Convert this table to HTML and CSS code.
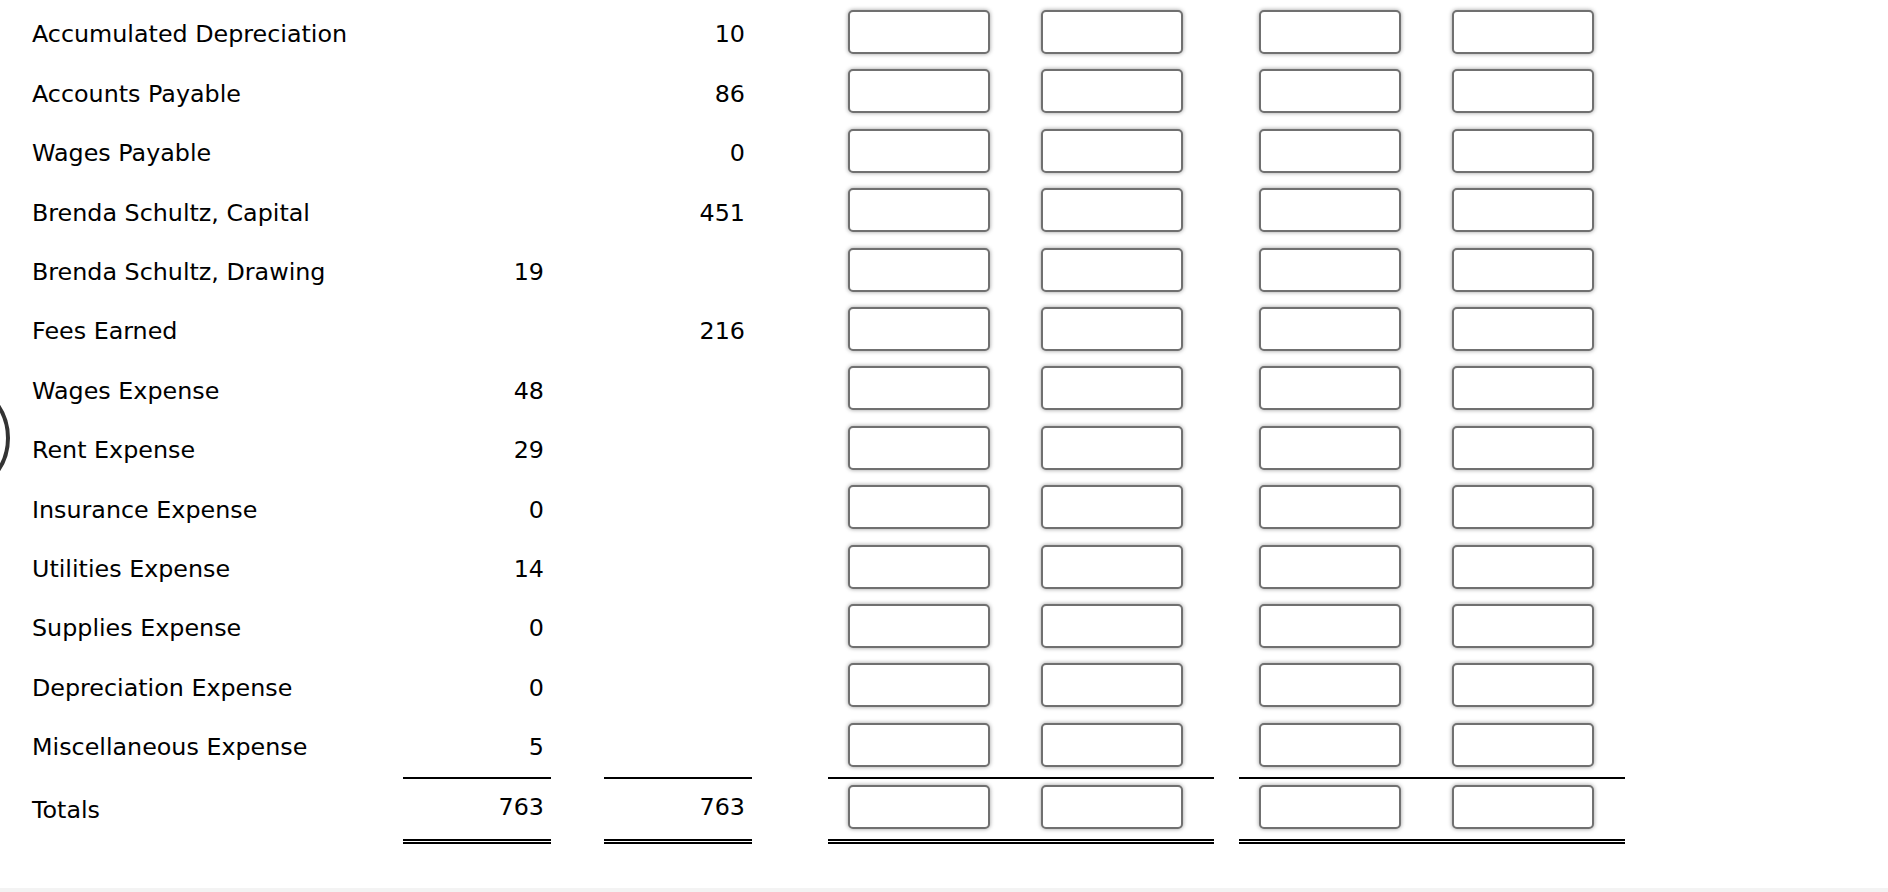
FILE: index.html
```html
<!DOCTYPE html>
<html>
<head>
<meta charset="utf-8">
<link rel="stylesheet" href="styles.css">
</head>
<body>
<div class="ring"></div>
<div class="sheet">
  <div class="row"><div class="label">Accumulated Depreciation</div><div class="num"></div><div class="num num2">10</div><div class="grp g1"><div class="cell"><input class="box"></div><div class="cell"><input class="box"></div></div><div class="grp g2"><div class="cell"><input class="box"></div><div class="cell"><input class="box"></div></div></div>
  <div class="row"><div class="label">Accounts Payable</div><div class="num"></div><div class="num num2">86</div><div class="grp g1"><div class="cell"><input class="box"></div><div class="cell"><input class="box"></div></div><div class="grp g2"><div class="cell"><input class="box"></div><div class="cell"><input class="box"></div></div></div>
  <div class="row"><div class="label">Wages Payable</div><div class="num"></div><div class="num num2">0</div><div class="grp g1"><div class="cell"><input class="box"></div><div class="cell"><input class="box"></div></div><div class="grp g2"><div class="cell"><input class="box"></div><div class="cell"><input class="box"></div></div></div>
  <div class="row"><div class="label">Brenda Schultz, Capital</div><div class="num"></div><div class="num num2">451</div><div class="grp g1"><div class="cell"><input class="box"></div><div class="cell"><input class="box"></div></div><div class="grp g2"><div class="cell"><input class="box"></div><div class="cell"><input class="box"></div></div></div>
  <div class="row"><div class="label">Brenda Schultz, Drawing</div><div class="num">19</div><div class="num num2"></div><div class="grp g1"><div class="cell"><input class="box"></div><div class="cell"><input class="box"></div></div><div class="grp g2"><div class="cell"><input class="box"></div><div class="cell"><input class="box"></div></div></div>
  <div class="row"><div class="label">Fees Earned</div><div class="num"></div><div class="num num2">216</div><div class="grp g1"><div class="cell"><input class="box"></div><div class="cell"><input class="box"></div></div><div class="grp g2"><div class="cell"><input class="box"></div><div class="cell"><input class="box"></div></div></div>
  <div class="row"><div class="label">Wages Expense</div><div class="num">48</div><div class="num num2"></div><div class="grp g1"><div class="cell"><input class="box"></div><div class="cell"><input class="box"></div></div><div class="grp g2"><div class="cell"><input class="box"></div><div class="cell"><input class="box"></div></div></div>
  <div class="row"><div class="label">Rent Expense</div><div class="num">29</div><div class="num num2"></div><div class="grp g1"><div class="cell"><input class="box"></div><div class="cell"><input class="box"></div></div><div class="grp g2"><div class="cell"><input class="box"></div><div class="cell"><input class="box"></div></div></div>
  <div class="row"><div class="label">Insurance Expense</div><div class="num">0</div><div class="num num2"></div><div class="grp g1"><div class="cell"><input class="box"></div><div class="cell"><input class="box"></div></div><div class="grp g2"><div class="cell"><input class="box"></div><div class="cell"><input class="box"></div></div></div>
  <div class="row"><div class="label">Utilities Expense</div><div class="num">14</div><div class="num num2"></div><div class="grp g1"><div class="cell"><input class="box"></div><div class="cell"><input class="box"></div></div><div class="grp g2"><div class="cell"><input class="box"></div><div class="cell"><input class="box"></div></div></div>
  <div class="row"><div class="label">Supplies Expense</div><div class="num">0</div><div class="num num2"></div><div class="grp g1"><div class="cell"><input class="box"></div><div class="cell"><input class="box"></div></div><div class="grp g2"><div class="cell"><input class="box"></div><div class="cell"><input class="box"></div></div></div>
  <div class="row"><div class="label">Depreciation Expense</div><div class="num">0</div><div class="num num2"></div><div class="grp g1"><div class="cell"><input class="box"></div><div class="cell"><input class="box"></div></div><div class="grp g2"><div class="cell"><input class="box"></div><div class="cell"><input class="box"></div></div></div>
  <div class="row"><div class="label">Miscellaneous Expense</div><div class="num">5</div><div class="num num2"></div><div class="grp g1"><div class="cell"><input class="box"></div><div class="cell"><input class="box"></div></div><div class="grp g2"><div class="cell"><input class="box"></div><div class="cell"><input class="box"></div></div></div>
  <div class="row total"><div class="label">Totals</div><div class="num">763</div><div class="num num2">763</div><div class="grp g1"><div class="cell"><input class="box"></div><div class="cell"><input class="box"></div></div><div class="grp g2"><div class="cell"><input class="box"></div><div class="cell"><input class="box"></div></div></div>
</div>
<div class="footer"></div>
</body>
</html>
```

FILE: styles.css
```css
html, body {
  margin: 0;
  padding: 0;
  background: #fff;
}
body {
  font-family: "DejaVu Sans", Verdana, sans-serif;
  font-size: 23.8px;
  color: #000;
  height: 892px;
  overflow: hidden;
  display: flex;
  flex-direction: column;
}
.sheet {
  padding: 2.3px 0 0 32px;
}
.row {
  display: flex;
  align-items: center;
  height: 59.4px;
}
.label {
  width: 371px;
  flex: none;
  white-space: nowrap;
  padding-top: 5px;
}
.num {
  width: 148px;
  flex: none;
  box-sizing: border-box;
  padding-top: 5px;
  padding-right: 7px;
  text-align: right;
  align-self: stretch;
  display: flex;
  align-items: center;
  justify-content: flex-end;
}
.num2 {
  margin-left: 53px;
}
.grp {
  display: flex;
  flex: none;
  width: 386px;
  align-self: stretch;
  align-items: center;
}
.g1 {
  margin-left: 76px;
}
.g2 {
  margin-left: 25px;
}
.cell {
  width: 193px;
  box-sizing: border-box;
  padding-left: 20px;
}
.box {
  display: block;
  width: 142px;
  height: 44px;
  box-sizing: border-box;
  margin: 0;
  padding: 0 6px;
  border: 2px solid #707070;
  border-radius: 5px;
  background: #fff;
  box-shadow: 0 0 4px rgba(0, 0, 0, 0.4);
  font: inherit;
}
.total {
  height: auto;
  margin-top: 2.6px;
  align-items: stretch;
}
.total .label {
  display: flex;
  align-items: center;
  padding-top: 0;
}
.total .num,
.total .grp {
  border-top: 2px solid #000;
  border-bottom: 5px double #000;
  padding-top: 6px;
  padding-bottom: 10px;
}
.footer {
  margin-top: auto;
  height: 4px;
  background: #f3f3f3;
}
.ring {
  position: absolute;
  left: -110px;
  top: 378px;
  width: 120px;
  height: 120px;
  box-sizing: border-box;
  border: 4px solid #333;
  border-radius: 50%;
}
```
